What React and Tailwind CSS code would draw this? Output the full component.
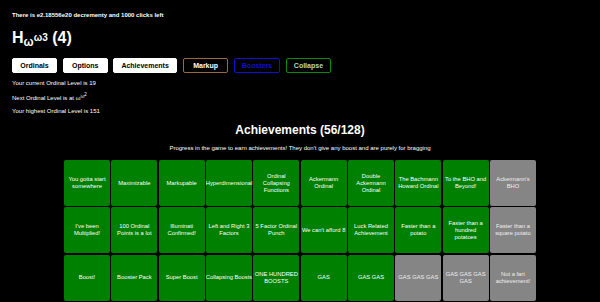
import React from "react";

const rows = [
  [
    ["You gotta start somewhere", true],
    ["Maximizable", true],
    ["Markupable", true],
    ["Hyperdimensional", true, true],
    ["Ordinal Collapsing Functions", true],
    ["Ackermann Ordinal", true],
    ["Double Ackermann Ordinal", true],
    ["The Bachmann Howard Ordinal", true],
    ["To the BHO and Beyond!", true],
    ["Ackermann's BHO", false],
  ],
  [
    ["I've been Multiplied!", true],
    ["100 Ordinal Points is a lot", true],
    ["Illuminati Confirmed!", true],
    ["Left and Right 3 Factors", true],
    ["5 Factor Ordinal Punch", true],
    ["We can't afford 8", true, true],
    ["Luck Related Achievement", true],
    ["Faster than a potato", true],
    ["Faster than a hundred potatoes", true],
    ["Faster than a square potato", false],
  ],
  [
    ["Boost!", true],
    ["Booster Pack", true],
    ["Super Boost", true],
    ["Collapsing Boosts", true, true],
    ["ONE HUNDRED BOOSTS", true],
    ["GAS", true],
    ["GAS GAS", true],
    ["GAS GAS GAS", false, true],
    ["GAS GAS GAS GAS", false],
    ["Not a fart achievement!", false],
  ],
];

export default function App() {
  const cells = rows.flat();
  return (
    <div className="w-[600px] h-[302px] overflow-hidden bg-black text-white font-['Liberation_Sans',Arial,sans-serif] px-3 pt-[11px]">
      <div className="text-[6px] leading-[8px] font-bold">
        There is e2.18556e20 decrementy and 1000 clicks left
      </div>
      <div className="mt-[9.5px] text-[16px] leading-[18px] font-bold">
        H<sub className="text-[12px] leading-none">ω<sup className="text-[10px] leading-none">ω3</sup></sub> (4)
      </div>
      <div className="mt-[11.5px] flex gap-[5.7px] h-[15px]">
        <button className="min-w-[45px] h-[15px] px-[7px] rounded-[2px] bg-white text-black text-[7px] font-bold leading-none border border-white">
          Ordinals
        </button>
        <button className="min-w-[45px] h-[15px] px-[7px] rounded-[2px] bg-white text-black text-[7px] font-bold leading-none border border-white">
          Options
        </button>
        <button className="min-w-[45px] h-[15px] px-[7px] rounded-[2px] bg-white text-black text-[7px] font-bold leading-none border border-white">
          Achievements
        </button>
        <button className="ml-[0.6px] min-w-[45px] h-[15px] px-[7px] rounded-[2px] bg-black text-white text-[7px] font-bold leading-none border border-[#9a6b3a]">
          Markup
        </button>
        <button className="min-w-[45px] h-[15px] px-[7px] rounded-[2px] bg-black text-[#1010d0] text-[7px] font-bold leading-none border border-[#1010d0]">
          Boosters
        </button>
        <button className="min-w-[45px] h-[15px] px-[7px] rounded-[2px] bg-black text-[#b8dcb8] text-[7px] font-bold leading-none border border-[#0c8a0c]">
          Collapse
        </button>
      </div>
      <div className="mt-[5.7px] text-[6px] leading-[8px]">Your current Ordinal Level is 19</div>
      <div className="mt-[7.7px] text-[6px] leading-[8px]">
        Next Ordinal Level is at ω<sup className="text-[5px] leading-none">ω<sup className="text-[4.5px] leading-none">2</sup></sup>
      </div>
      <div className="mt-[4.6px] text-[6px] leading-[8px]">Your highest Ordinal Level is 151</div>
      <div className="mt-[8.4px] text-center text-[12px] leading-[14px] font-bold">Achievements (56/128)</div>
      <div className="mt-[6.5px] text-center text-[6px] leading-[8px]">
        Progress in the game to earn achievements! They don't give any boost and are purely for bragging
      </div>
      <div className="mt-[8.3px] mx-auto w-[472px] grid grid-cols-[repeat(10,46px)] auto-rows-[46px] gap-[1.33px]">
        {cells.map(([label, done, nowrap], i) => (
          <div
            key={i}
            className={
              "flex items-center justify-center text-center rounded-[2px] text-[5.8px] leading-[7px] " +
              (done ? "bg-[#008000] text-white" : "bg-[#858585] text-[#eeeeee]")
            }
          >
            <span className={nowrap ? "whitespace-nowrap" : "px-[0.5px]"}>{label}</span>
          </div>
        ))}
      </div>
    </div>
  );
}
